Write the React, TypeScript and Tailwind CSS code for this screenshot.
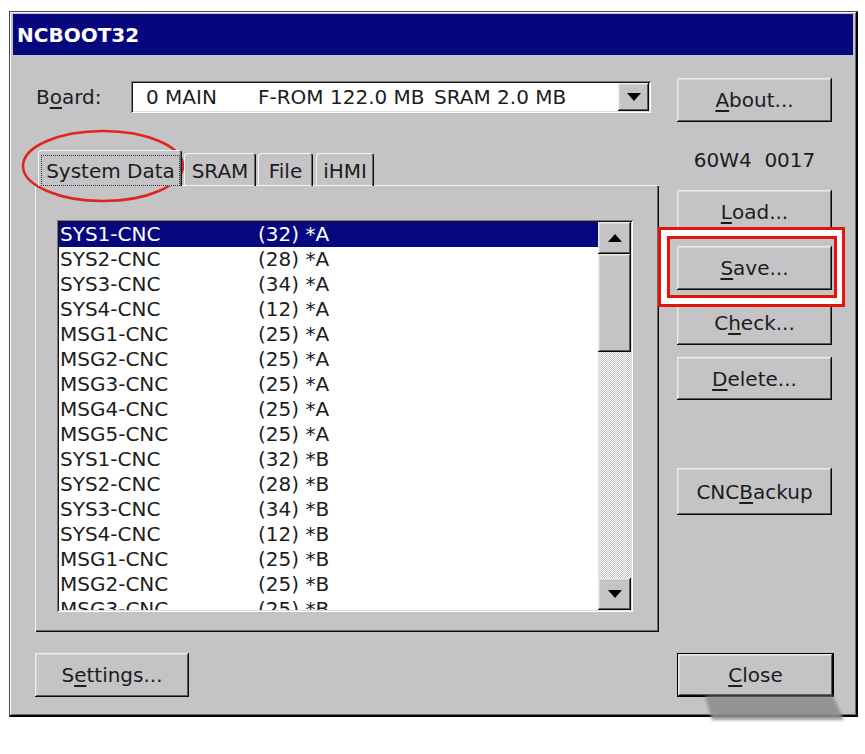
import React from "react";

const raised =
  "bg-[#c4c4c6] shadow-[inset_-1px_-1px_#0a0a0a,inset_1px_1px_#ececec,inset_-2px_-2px_#5a5a5a,inset_2px_2px_#d6d6d6]";
const sunken =
  "shadow-[inset_1px_1px_#7a7a7a,inset_-1px_-1px_#ffffff,inset_2px_2px_#151515,inset_-2px_-2px_#dcdcdc]";

const rows: [string, string][] = [
  ["SYS1-CNC", "(32) *A"],
  ["SYS2-CNC", "(28) *A"],
  ["SYS3-CNC", "(34) *A"],
  ["SYS4-CNC", "(12) *A"],
  ["MSG1-CNC", "(25) *A"],
  ["MSG2-CNC", "(25) *A"],
  ["MSG3-CNC", "(25) *A"],
  ["MSG4-CNC", "(25) *A"],
  ["MSG5-CNC", "(25) *A"],
  ["SYS1-CNC", "(32) *B"],
  ["SYS2-CNC", "(28) *B"],
  ["SYS3-CNC", "(34) *B"],
  ["SYS4-CNC", "(12) *B"],
  ["MSG1-CNC", "(25) *B"],
  ["MSG2-CNC", "(25) *B"],
  ["MSG3-CNC", "(25) *B"],
];

const U = ({ c }: { c: string }) => <span className="underline underline-offset-[3px]">{c}</span>;

const Btn = ({ children, h, cls = "" }: { children: React.ReactNode; h: string; cls?: string }) => (
  <div className={`${raised} ${h} ${cls} flex items-center justify-center`}>{children}</div>
);

const Arrow = ({ down }: { down?: boolean }) => (
  <svg width="14" height="8" viewBox="0 0 14 8">
    <path d={down ? "M0 0 L14 0 L7 8 Z" : "M0 8 L14 8 L7 0 Z"} fill="#000" />
  </svg>
);

const App = () => {
  return (
    <div className="relative w-[865px] h-[754px] bg-white overflow-hidden pl-[9px] pt-[11px] font-['DejaVu_Sans',sans-serif] text-[20px] text-[#1c1c1c]">
      <div className="w-[849px] h-[706px] bg-[#c4c4c6] pl-[4px] pr-[5px] pt-[3px] pb-[3px] flex flex-col shadow-[inset_1px_1px_#4a4a4a,inset_-2px_-2px_#000,inset_2px_2px_#fafafa,inset_-3px_-3px_#6a6a6a]">
        <div className="h-[41px] bg-[#06067e] flex items-center pl-[4px] text-white font-bold">NCBOOT32</div>

        <div className="flex flex-row flex-1 pl-[22px]">
          {/* left column */}
          <div className="w-[624px] flex flex-col">
            <div className="mt-[26px] h-[32px] flex items-center">
              <div className="w-[96px] pl-[1px]">
                B<U c="o" />ard:
              </div>
              <div className={`w-[520px] h-[32px] bg-white ${sunken} flex items-center pl-[15px] pr-[2px]`}>
                <span className="w-[112px]">0 MAIN</span>
                <span className="w-[176px]">F-ROM 122.0 MB</span>
                <span className="flex-1">SRAM 2.0 MB</span>
                <div className={`${raised} w-[31px] h-[28px] flex items-center justify-center`}>
                  <Arrow down />
                </div>
              </div>
            </div>

            {/* tabs */}
            <div className="mt-[37px] h-[36px] flex items-end pl-[3px] relative z-10">
              <div className="w-[144px] h-[36px] rounded-t-[3px] bg-[#c4c4c6] shadow-[inset_1px_1px_#f4f4f4,inset_-1px_0_#0a0a0a,inset_-2px_0_#6a6a6a] pt-[5px] pl-[3px] pr-[2px]">
                <div className="h-[31px] border border-dotted border-[#333] flex items-center justify-center">System Data</div>
              </div>
              <div className="ml-[2px] w-[72px] h-[33px] rounded-t-[3px] shadow-[inset_1px_1px_#f4f4f4,inset_-1px_0_#0a0a0a,inset_-2px_0_#6a6a6a] flex items-center justify-center pt-[2px]">
                SRAM
              </div>
              <div className="ml-[2px] w-[55px] h-[33px] rounded-t-[3px] shadow-[inset_1px_1px_#f4f4f4,inset_-1px_0_#0a0a0a,inset_-2px_0_#6a6a6a] flex items-center justify-center pt-[2px]">
                File
              </div>
              <div className="ml-[3px] w-[58px] h-[33px] rounded-t-[3px] shadow-[inset_1px_1px_#f4f4f4,inset_-1px_0_#0a0a0a,inset_-2px_0_#6a6a6a] flex items-center justify-center pt-[2px]">
                iHMI
              </div>
            </div>

            {/* panel */}
            <div className="-mt-[1px] h-[447px] shadow-[inset_1px_1px_#f4f4f4,inset_-1px_-1px_#0a0a0a,inset_-2px_-2px_#6a6a6a] pt-[35px] pl-[22px]">
              <div className={`w-[576px] h-[392px] bg-white ${sunken} p-[2px] flex`}>
                <div className="w-[539px] h-[388px] overflow-hidden">
                  {rows.map(([a, b], i) => (
                    <div
                      key={i}
                      className={`h-[25px] leading-[25px] flex ${i === 0 ? "bg-[#07077f] text-white" : ""}`}
                    >
                      <span className="w-[199px] pl-[1px]">{a}</span>
                      <span>{b}</span>
                    </div>
                  ))}
                </div>
                <div className="w-[33px] h-[388px] flex flex-col">
                  <div className={`${raised} h-[32px] flex items-center justify-center`}>
                    <Arrow />
                  </div>
                  <div className={`${raised} h-[98px]`} />
                  <div className="flex-1 bg-[repeating-conic-gradient(#c4c4c6_0_25%,#ffffff_0_50%)] bg-[length:2px_2px]" />
                  <div className={`${raised} h-[32px] flex items-center justify-center`}>
                    <Arrow down />
                  </div>
                </div>
              </div>
            </div>

            <Btn h="h-[44px]" cls="mt-[21px] w-[154px]">
              S<U c="e" />ttings...
            </Btn>
          </div>

          {/* right column */}
          <div className="ml-[18px] w-[156px] flex flex-col">
            <Btn h="h-[44px]" cls="mt-[23px] w-[155px]">
              <U c="A" />bout...
            </Btn>
            <div className="h-[68px] w-[155px] flex items-center justify-center pt-[8px] whitespace-pre">60W4  0017</div>
            <Btn h="h-[43px]" cls="w-[155px]">
              <U c="L" />oad...
            </Btn>
            <Btn h="h-[44px]" cls="mt-[13px] w-[155px]">
              <U c="S" />ave...
            </Btn>
            <Btn h="h-[45px]" cls="mt-[10px] w-[155px]">
              C<U c="h" />eck...
            </Btn>
            <Btn h="h-[43px]" cls="mt-[12px] w-[155px]">
              <U c="D" />elete...
            </Btn>
            <Btn h="h-[47px]" cls="mt-[68px] w-[155px]">
              CNC<U c="B" />ackup
            </Btn>
            <div className="mt-[138px] w-[157px] h-[44px] border border-black">
              <Btn h="h-[42px]" cls="w-full">
                <U c="C" />lose
              </Btn>
            </div>
          </div>
        </div>
      </div>

      {/* annotation: red ellipse round the first tab */}
      <svg className="absolute left-[20px] top-[128px]" width="166" height="76" viewBox="0 0 166 76">
        <ellipse cx="83" cy="38" rx="80" ry="35" fill="none" stroke="#e0261c" strokeWidth="2.5" />
      </svg>

      {/* annotation: red double frame round Save */}
      <div className="absolute left-[658px] top-[227px] w-[187px] h-[80px] border-[3px] border-[#e3140c]">
        <div className="w-full h-full border-[6px] border-r-[5px] border-white">
          <div className="w-full h-full border-[3px] border-[#e3140c]" />
        </div>
      </div>

      {/* gray smudge below Close */}
      <svg className="absolute left-[700px] top-[692px]" width="150" height="34" viewBox="0 0 150 34">
        <defs>
          <filter id="bl" x="-10%" y="-30%" width="120%" height="160%">
            <feGaussianBlur stdDeviation="1.6" />
          </filter>
        </defs>
        <polygon points="5,4 133,4 144,28 12,28" fill="#8e8e8e" filter="url(#bl)" opacity="0.9" />
      </svg>
    </div>
  );
};

export default App;
